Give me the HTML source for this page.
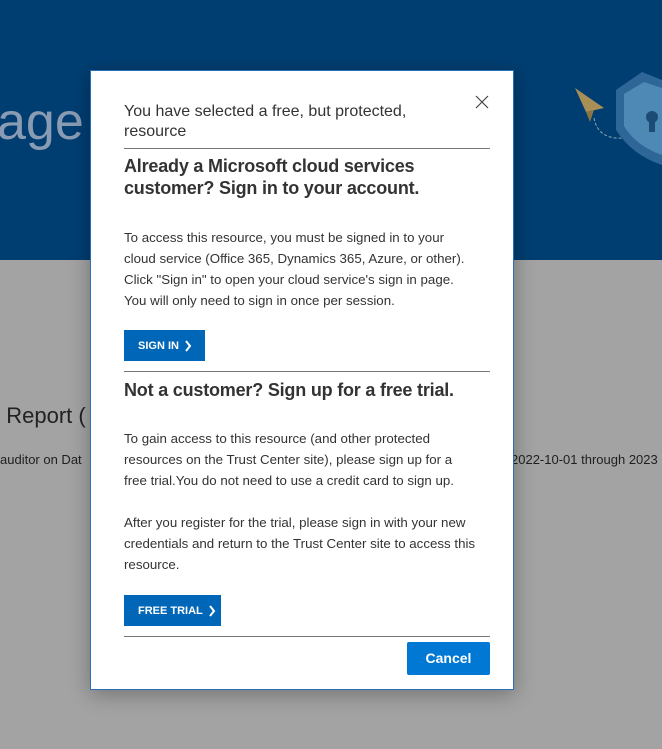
<!DOCTYPE html>
<html><head><meta charset="utf-8"><style>
*{margin:0;padding:0;box-sizing:border-box}
body{width:662px;height:749px;overflow:hidden;position:relative;font-family:"Liberation Sans",sans-serif;background:#a3a3a3}
.hdr{position:absolute;left:0;top:0;width:662px;height:260px;background:#003e72}
.bg{position:absolute;color:#1f1f1f;font-size:14px;white-space:nowrap}
.modal{position:absolute;left:90px;top:70px;width:424px;height:620px;background:#fff;border:1px solid #2a6fb5;box-shadow:0 4px 20px rgba(0,0,0,.3)}
.in{position:absolute;left:33px;width:380px;white-space:nowrap}
.t{font-size:16px;line-height:20px;color:#333}
.h{font-size:18px;line-height:22px;color:#333;font-weight:bold;letter-spacing:-.2px}
.p{font-size:13.3px;line-height:21px;color:#333}
.hr{position:absolute;left:33px;width:366px;height:1px;background:#777}
.btn{position:absolute;left:33px;background:#0067b8;color:#fff;font-size:11px;font-weight:bold;display:flex;align-items:center;padding-left:14px}
.btn svg{margin-left:5px}
</style></head><body>
<div class="hdr"></div>
<div class="bg" style="left:-3px;top:92px;font-size:52px;color:#8a9cb3;font-weight:300">age</div>
<svg style="position:absolute;left:572px;top:70px" width="90" height="100" viewBox="0 0 90 100">
<path d="M3 18 L32 38 L14 42 Z" fill="#a88f55"/><path d="M14 42 L18 52 L22 40Z" fill="#8a7444"/>
<path d="M22 48 Q26 70 52 68" stroke="#8aa" stroke-dasharray="3 2" fill="none"/>
<path d="M44 20 L70 2 L90 10 L90 95 Q60 85 44 60 Z" fill="#2e6797"/>
<path d="M52 24 L72 12 L90 18 L90 85 Q64 76 52 56Z" fill="#4d89b4"/>
<circle cx="80" cy="47" r="6" fill="#1c4c75"/><rect x="77" y="48" width="6" height="14" fill="#1c4c75"/>
</svg>
<div class="bg" style="left:-6px;top:403px;font-size:22px;color:#222">. Report (</div>
<div class="bg" style="left:0;top:452px;font-size:13px">auditor on Dat</div>
<div class="bg" style="left:511px;top:452px;font-size:13px">2022-10-01 through 2023</div>
<div class="modal">
<svg style="position:absolute;left:384px;top:24px" width="14" height="14"><path d="M1 1L13 13M13 1L1 13" stroke="#444" stroke-width="1.2"/></svg>
<div class="in t" style="top:31px">You have selected a free, but protected,<br>resource</div>
<div class="hr" style="top:77px"></div>
<div class="in h" style="top:84px">Already a Microsoft cloud services<br>customer? Sign in to your account.</div>
<div class="in p" style="top:156px">To access this resource, you must be signed in to your<br>cloud service (Office 365, Dynamics 365, Azure, or other).<br>Click "Sign in" to open your cloud service's sign in page.<br>You will only need to sign in once per session.</div>
<div class="btn" style="top:259px;width:81px;height:31px">SIGN IN<svg width="8" height="12"><path d="M2 1L6 6L2 11" stroke="#fff" stroke-width="2" fill="none"/></svg></div>
<div class="hr" style="top:300px"></div>
<div class="in h" style="top:308px">Not a customer? Sign up for a free trial.</div>
<div class="in p" style="top:357px">To gain access to this resource (and other protected<br>resources on the Trust Center site), please sign up for a<br>free trial.You do not need to use a credit card to sign up.</div>
<div class="in p" style="top:441px">After you register for the trial, please sign in with your new<br>credentials and return to the Trust Center site to access this<br>resource.</div>
<div class="btn" style="top:524px;width:97px;height:31px">FREE TRIAL<svg width="8" height="12"><path d="M2 1L6 6L2 11" stroke="#fff" stroke-width="2" fill="none"/></svg></div>
<div class="hr" style="top:565px"></div>
<div style="position:absolute;left:316px;top:571px;width:83px;height:33px;background:#0078d4;border-radius:2px;color:#fff;font-size:14px;font-weight:bold;text-align:center;line-height:33px">Cancel</div>
</div>
</body></html>
